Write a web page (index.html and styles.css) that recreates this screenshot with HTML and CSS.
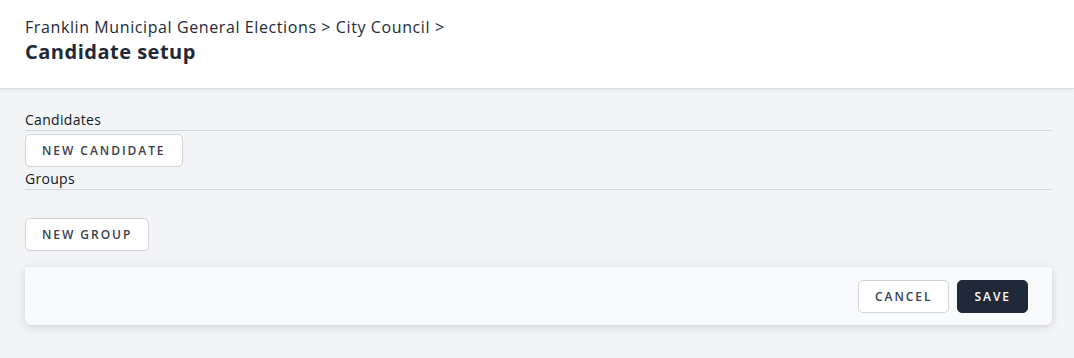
FILE: index.html
```html
<!DOCTYPE html>
<html>
<head>
<meta charset="utf-8">
<link rel="stylesheet" href="styles.css">
</head>
<body>
<header class="header">
  <div class="crumbs">Franklin Municipal General Elections &gt; City Council &gt;</div>
  <h1 class="title">Candidate setup</h1>
</header>
<main class="content">
  <section class="section">
    <div class="section-label">Candidates</div>
    <button class="btn">NEW CANDIDATE</button>
  </section>
  <section class="section">
    <div class="section-label">Groups</div>
    <div class="group-list"></div>
    <button class="btn">NEW GROUP</button>
  </section>
  <div class="footer">
    <button class="btn">CANCEL</button>
    <button class="btn btn-dark">SAVE</button>
  </div>
</main>
</body>
</html>
```

FILE: styles.css
```css
* { box-sizing: border-box; }
html, body { margin: 0; padding: 0; }
body {
  font-family: "Open Sans", "Noto Sans", sans-serif;
  background: #f3f4f6;
  color: #111827;
  width: 1074px;
  height: 358px;
  overflow: hidden;
}
.header {
  background: #ffffff;
  height: 89px;
  padding: 16px 25px 0;
  border-bottom: 1px solid #dcdde0;
  box-shadow: 0 1px 3px rgba(0,0,0,0.06);
}
.crumbs {
  font-size: 16px;
  line-height: 22px;
  color: #1f2937;
  letter-spacing: 0.6px;
}
.title {
  margin: 1px 0 0;
  font-size: 20px;
  line-height: 26px;
  font-weight: 700;
  letter-spacing: 0.5px;
  color: #1f2937;
}
.content {
  padding: 21px 22px 0 25px;
  display: flex;
  flex-direction: column;
}
.section { display: flex; flex-direction: column; align-items: flex-start; }
.section-label {
  width: 100%;
  font-size: 14px;
  line-height: 20px;
  color: #111827;
  letter-spacing: 0.3px;
  border-bottom: 1px solid #d1d5db;
  margin-bottom: 3px;
}
.section + .section { margin-top: 2px; }
.group-list { height: 25px; }
.btn {
  font-family: "Open Sans", "Noto Sans", sans-serif;
  height: 33px;
  padding: 0 16px;
  background: #ffffff;
  border: 1px solid #d1d5db;
  border-radius: 5px;
  font-size: 12px;
  font-weight: 600;
  letter-spacing: 1.95px;
  color: #374151;
  cursor: pointer;
}
.footer {
  margin-top: 16px;
  height: 58px;
  background: #f9fafb;
  border-radius: 0 0 6px 6px;
  box-shadow: 0 2px 10px rgba(0,0,0,0.12), 0 0 4px rgba(0,0,0,0.04);
  display: flex;
  justify-content: flex-end;
  align-items: center;
  gap: 8px;
  padding-right: 24px;
}
.btn-dark {
  background: #1f2937;
  border-color: #1f2937;
  color: #ffffff;
}
```
